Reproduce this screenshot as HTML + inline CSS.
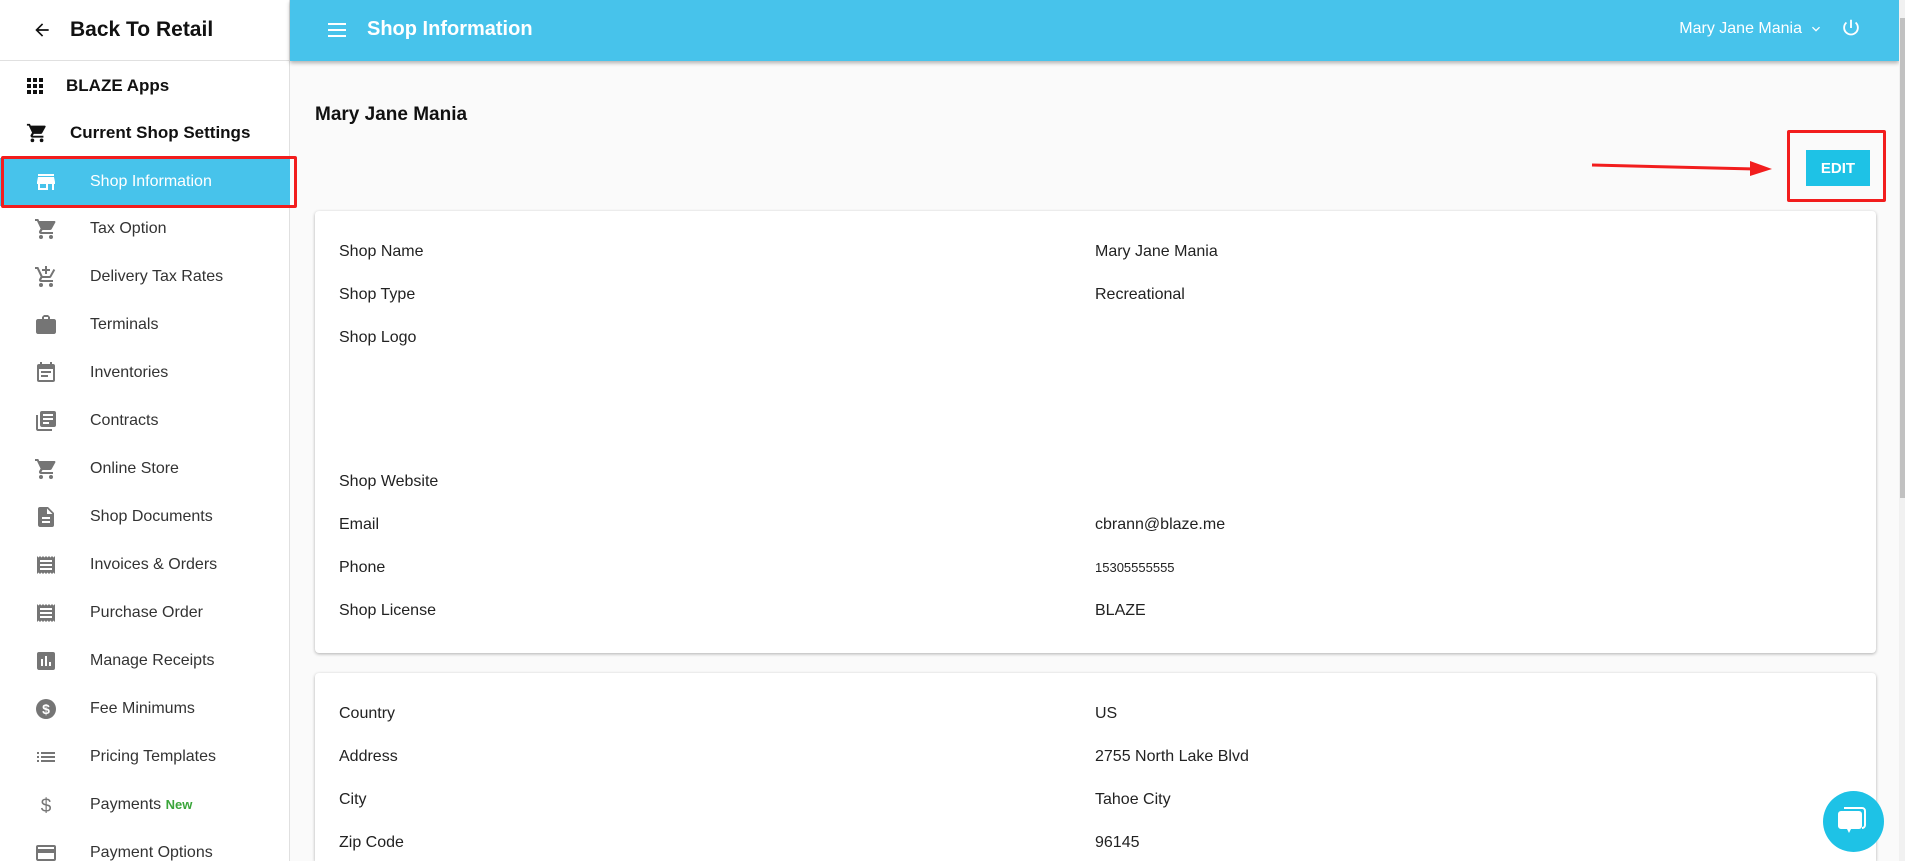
<!DOCTYPE html>
<html style="overflow:hidden;width:1905px;height:861px"><head><meta charset="utf-8"><style>
*{box-sizing:border-box;margin:0;padding:0}
body{width:1905px;height:861px;overflow:hidden;background:#fafafa;font-family:"Liberation Sans",sans-serif;color:#212121;position:relative}
.sb{position:absolute;left:0;top:0;width:290px;height:861px;background:#fff;border-right:1px solid #e0e0e0}
.back{height:61px;border-bottom:1px solid #e0e0e0;display:flex;align-items:center;padding-left:32px;font-size:21px;font-weight:bold;color:#111}
.back svg{margin-right:18px}
.top{position:absolute;left:26px;font-size:17px;font-weight:bold;color:#111;display:flex;align-items:center}
.top svg{margin-right:22px}
.item{position:absolute;left:0;width:290px;height:48px;display:flex;align-items:center;font-size:16px;color:#333}
.item .ic{position:absolute;left:34px;top:12px;width:24px;height:24px}
.item span{position:absolute;left:90px}
.act{background:#47c3eb;color:#fff}
.hdr{position:absolute;left:290px;top:0;width:1609px;height:61px;background:#47c3eb;box-shadow:0 2px 4px rgba(0,0,0,.3);color:#fff}
.title{position:absolute;left:77px;top:18px;font-size:20px;font-weight:bold}
.user{position:absolute;right:97px;top:20px;font-size:16px}
h1{position:absolute;left:315px;top:104px;font-size:19px;font-weight:bold;color:#111}
.edit{position:absolute;left:1806px;top:150px;width:64px;height:36px;background:#1ec2e6;color:#fff;font-size:15px;font-weight:bold;display:flex;align-items:center;justify-content:center}
.redbox{position:absolute;border:3px solid #f21d1d;border-radius:2px}
.card{position:absolute;left:315px;width:1561px;background:#fff;border-radius:4px;box-shadow:0 1px 3px rgba(0,0,0,.3);overflow:hidden}
.r{position:absolute;font-size:16px;color:#222}
.v{left:780px}
.l{left:24px}
.scroll{position:absolute;right:0;top:0;width:6px;height:861px;background:#f1f1f1}
.thumb{position:absolute;right:0;top:18px;width:5px;height:480px;background:#c1c1c1}
</style></head><body>
<div class="sb">
<div class="back"><svg width="20" height="20" viewBox="0 0 24 24"><path d="M20 11H7.8l5.6-5.6L12 4l-8 8 8 8 1.4-1.4L7.8 13H20z" fill="#111"/></svg>Back To Retail</div>
<div class="top" style="top:76px"><svg width="18" height="18" viewBox="0 0 18 18" fill="#111"><rect x="1" y="1" width="4" height="4"/><rect x="7" y="1" width="4" height="4"/><rect x="13" y="1" width="4" height="4"/><rect x="1" y="7" width="4" height="4"/><rect x="7" y="7" width="4" height="4"/><rect x="13" y="7" width="4" height="4"/><rect x="1" y="13" width="4" height="4"/><rect x="7" y="13" width="4" height="4"/><rect x="13" y="13" width="4" height="4"/></svg>BLAZE Apps</div>
<div class="top" style="top:122px"><svg width="22" height="22" viewBox="0 0 24 24" fill="#111"><path d="M7 18a2 2 0 100 4 2 2 0 000-4zM1 2v2h2l3.6 7.6-1.4 2.4A2 2 0 007 17h12v-2H7.4l1.1-2h7.5c.8 0 1.4-.4 1.7-1l3.6-6.5A1 1 0 0020.5 4H5.2l-.9-2zm16 16a2 2 0 100 4 2 2 0 000-4z"/></svg>Current Shop Settings</div>
<div class="item act" style="top:158px"><svg class="ic" viewBox="0 0 24 24" fill="#fff"><path d="M20 4H4v2h16zm1 10v-2l-1-5H4l-1 5v2h1v6h10v-6h4v6h2v-6zm-9 4H6v-4h6z"/></svg><span>Shop Information</span></div>
<div class="item" style="top:205px"><svg class="ic" viewBox="0 0 24 24" fill="#757575"><path d="M7 18a2 2 0 100 4 2 2 0 000-4zM1 2v2h2l3.6 7.6-1.4 2.4A2 2 0 007 17h12v-2H7.4l1.1-2h7.5c.8 0 1.4-.4 1.7-1l3.6-6.5A1 1 0 0020.5 4H5.2l-.9-2zm16 16a2 2 0 100 4 2 2 0 000-4z"/></svg><span>Tax Option</span></div>
<div class="item" style="top:253px"><svg class="ic" viewBox="0 0 24 24" fill="#757575"><path d="M11 9h2V6h3V4h-3V1h-2v3H8v2h3zm-4 9a2 2 0 100 4 2 2 0 000-4zm10 0a2 2 0 100 4 2 2 0 000-4zM7.2 14.8l.1-.1.9-1.7h7.4c.8 0 1.4-.4 1.7-1l3.9-7-1.7-1-3.9 7h-7L4.3 2H1v2h2l3.6 7.6-1.4 2.4A2 2 0 007 17h12v-2H7.4a.3.3 0 01-.2-.2z"/></svg><span>Delivery Tax Rates</span></div>
<div class="item" style="top:301px"><svg class="ic" viewBox="0 0 24 24" fill="#757575"><path d="M20 6h-4V4l-2-2h-4L8 4v2H4c-1.1 0-2 .9-2 2v11c0 1.1.9 2 2 2h16c1.1 0 2-.9 2-2V8c0-1.1-.9-2-2-2zm-6 0h-4V4h4z"/></svg><span>Terminals</span></div>
<div class="item" style="top:349px"><svg class="ic" viewBox="0 0 24 24" fill="#757575"><path d="M17 10H7v2h10zm2-7h-1V1h-2v2H8V1H6v2H5a2 2 0 00-2 2v14a2 2 0 002 2h14a2 2 0 002-2V5a2 2 0 00-2-2zm0 16H5V8h14zm-5-5H7v2h7z"/></svg><span>Inventories</span></div>
<div class="item" style="top:397px"><svg class="ic" viewBox="0 0 24 24" fill="#757575"><path d="M4 6H2v14c0 1.1.9 2 2 2h14v-2H4zm16-4H8a2 2 0 00-2 2v12c0 1.1.9 2 2 2h12a2 2 0 002-2V4a2 2 0 00-2-2zm-1 9H9V9h10zm-4 4H9v-2h6zm4-8H9V5h10z"/></svg><span>Contracts</span></div>
<div class="item" style="top:445px"><svg class="ic" viewBox="0 0 24 24" fill="#757575"><path d="M7 18a2 2 0 100 4 2 2 0 000-4zM1 2v2h2l3.6 7.6-1.4 2.4A2 2 0 007 17h12v-2H7.4l1.1-2h7.5c.8 0 1.4-.4 1.7-1l3.6-6.5A1 1 0 0020.5 4H5.2l-.9-2zm16 16a2 2 0 100 4 2 2 0 000-4z"/></svg><span>Online Store</span></div>
<div class="item" style="top:493px"><svg class="ic" viewBox="0 0 24 24" fill="#757575"><path d="M14 2H6a2 2 0 00-2 2v16c0 1.1.9 2 2 2h12a2 2 0 002-2V8zm2 16H8v-2h8zm0-4H8v-2h8zm-3-5V3.5L18.5 9z"/></svg><span>Shop Documents</span></div>
<div class="item" style="top:541px"><svg class="ic" viewBox="0 0 24 24" fill="#757575"><path d="M3 3v18l1.5-1.5L6 21l1.5-1.5L9 21l1.5-1.5L12 21l1.5-1.5L15 21l1.5-1.5L18 21l1.5-1.5L21 21V3l-1.5 1.5L18 3l-1.5 1.5L15 3l-1.5 1.5L12 3l-1.5 1.5L9 3 7.5 4.5 6 3 4.5 4.5zm3 4h12v2H6zm0 4h12v2H6zm0 4h12v2H6z"/></svg><span>Invoices &amp; Orders</span></div>
<div class="item" style="top:589px"><svg class="ic" viewBox="0 0 24 24" fill="#757575"><path d="M3 3v18l1.5-1.5L6 21l1.5-1.5L9 21l1.5-1.5L12 21l1.5-1.5L15 21l1.5-1.5L18 21l1.5-1.5L21 21V3l-1.5 1.5L18 3l-1.5 1.5L15 3l-1.5 1.5L12 3l-1.5 1.5L9 3 7.5 4.5 6 3 4.5 4.5zm3 4h12v2H6zm0 4h12v2H6zm0 4h12v2H6z"/></svg><span>Purchase Order</span></div>
<div class="item" style="top:637px"><svg class="ic" viewBox="0 0 24 24" fill="#757575"><path d="M19 3H5a2 2 0 00-2 2v14c0 1.1.9 2 2 2h14a2 2 0 002-2V5a2 2 0 00-2-2zM9 17H7v-7h2zm4 0h-2V7h2zm4 0h-2v-4h2z"/></svg><span>Manage Receipts</span></div>
<div class="item" style="top:685px"><svg class="ic" viewBox="0 0 24 24"><circle cx="12" cy="12" r="10" fill="#757575"/><text x="12" y="17" text-anchor="middle" font-size="14" font-weight="bold" fill="#fff" font-family="Liberation Sans">$</text></svg><span>Fee Minimums</span></div>
<div class="item" style="top:733px"><svg class="ic" viewBox="0 0 24 24" fill="#757575"><path d="M3 13h2v-2H3zm0 4h2v-2H3zm0-8h2V7H3zm4 4h14v-2H7zm0 4h14v-2H7zM7 7v2h14V7z"/></svg><span>Pricing Templates</span></div>
<div class="item" style="top:781px"><svg class="ic" viewBox="0 0 24 24"><text x="12" y="19" text-anchor="middle" font-size="19" fill="#757575" font-family="Liberation Sans">$</text></svg><span>Payments <b style="color:#3aa53a;font-size:13px">New</b></span></div>
<div class="item" style="top:829px"><svg class="ic" viewBox="0 0 24 24" fill="#757575"><path d="M20 4H4a2 2 0 00-2 2v12c0 1.1.9 2 2 2h16a2 2 0 002-2V6a2 2 0 00-2-2zm0 14H4v-6h16zm0-10H4V6h16z"/></svg><span>Payment Options</span></div>
<div class="redbox" style="left:1px;top:156px;width:296px;height:52px"></div>
</div>
<div class="hdr">
<svg style="position:absolute;left:38px;top:21px" width="20" height="18" viewBox="0 0 20 18" fill="#fff"><rect y="2" width="18" height="2"/><rect y="8" width="18" height="2"/><rect y="14" width="18" height="2"/></svg>
<div class="title">Shop Information</div>
<div class="user">Mary Jane Mania</div>
<svg style="position:absolute;left:1518px;top:21px" width="16" height="16" viewBox="0 0 24 24"><path d="M7.4 8.6L12 13.2l4.6-4.6L18 10l-6 6-6-6z" fill="#fff"/></svg>
<svg style="position:absolute;left:1550px;top:17px" width="22" height="22" viewBox="0 0 24 24" fill="none" stroke="#fff" stroke-width="2"><path d="M12 3v9"/><path d="M7 6a7.5 7.5 0 1010 0"/></svg>
</div>
<h1>Mary Jane Mania</h1>
<svg style="position:absolute;left:1590px;top:155px" width="190" height="22"><line x1="2" y1="10" x2="165" y2="14" stroke="#f21d1d" stroke-width="3"/><polygon points="160,6 182,14 160,21" fill="#f21d1d"/></svg>
<div class="redbox" style="left:1787px;top:130px;width:99px;height:72px"></div>
<div class="edit">EDIT</div>
<div class="card" style="top:211px;height:442px">
<div class="r l" style="top:32px">Shop Name</div><div class="r v" style="top:32px">Mary Jane Mania</div>
<div class="r l" style="top:75px">Shop Type</div><div class="r v" style="top:75px">Recreational</div>
<div class="r l" style="top:118px">Shop Logo</div>
<div class="r l" style="top:262px">Shop Website</div>
<div class="r l" style="top:305px">Email</div><div class="r v" style="top:305px">cbrann@blaze.me</div>
<div class="r l" style="top:348px">Phone</div><div class="r v" style="top:349px;font-size:13px">15305555555</div>
<div class="r l" style="top:391px">Shop License</div><div class="r v" style="top:391px">BLAZE</div>
</div>
<div class="card" style="top:673px;height:188px;border-bottom-left-radius:0;border-bottom-right-radius:0">
<div class="r l" style="top:32px">Country</div><div class="r v" style="top:32px">US</div>
<div class="r l" style="top:75px">Address</div><div class="r v" style="top:75px">2755 North Lake Blvd</div>
<div class="r l" style="top:118px">City</div><div class="r v" style="top:118px">Tahoe City</div>
<div class="r l" style="top:161px">Zip Code</div><div class="r v" style="top:161px">96145</div>
</div>
<div style="position:absolute;left:1823px;top:791px;width:61px;height:61px;border-radius:50%;background:#1ec2e6"></div>
<svg style="position:absolute;left:1836px;top:805px" width="34" height="32" viewBox="0 0 34 32"><path d="M8 3h18a3 3 0 013 3v14a3 3 0 01-3 3" fill="none" stroke="#fff" stroke-width="2"/><path d="M5 6h18a3 3 0 013 3v12a3 3 0 01-3 3h-8l-2 4-2-4H5a3 3 0 01-3-3V9a3 3 0 013-3z" fill="#fff"/></svg>
<div class="scroll"><div class="thumb"></div></div>
</body></html>
